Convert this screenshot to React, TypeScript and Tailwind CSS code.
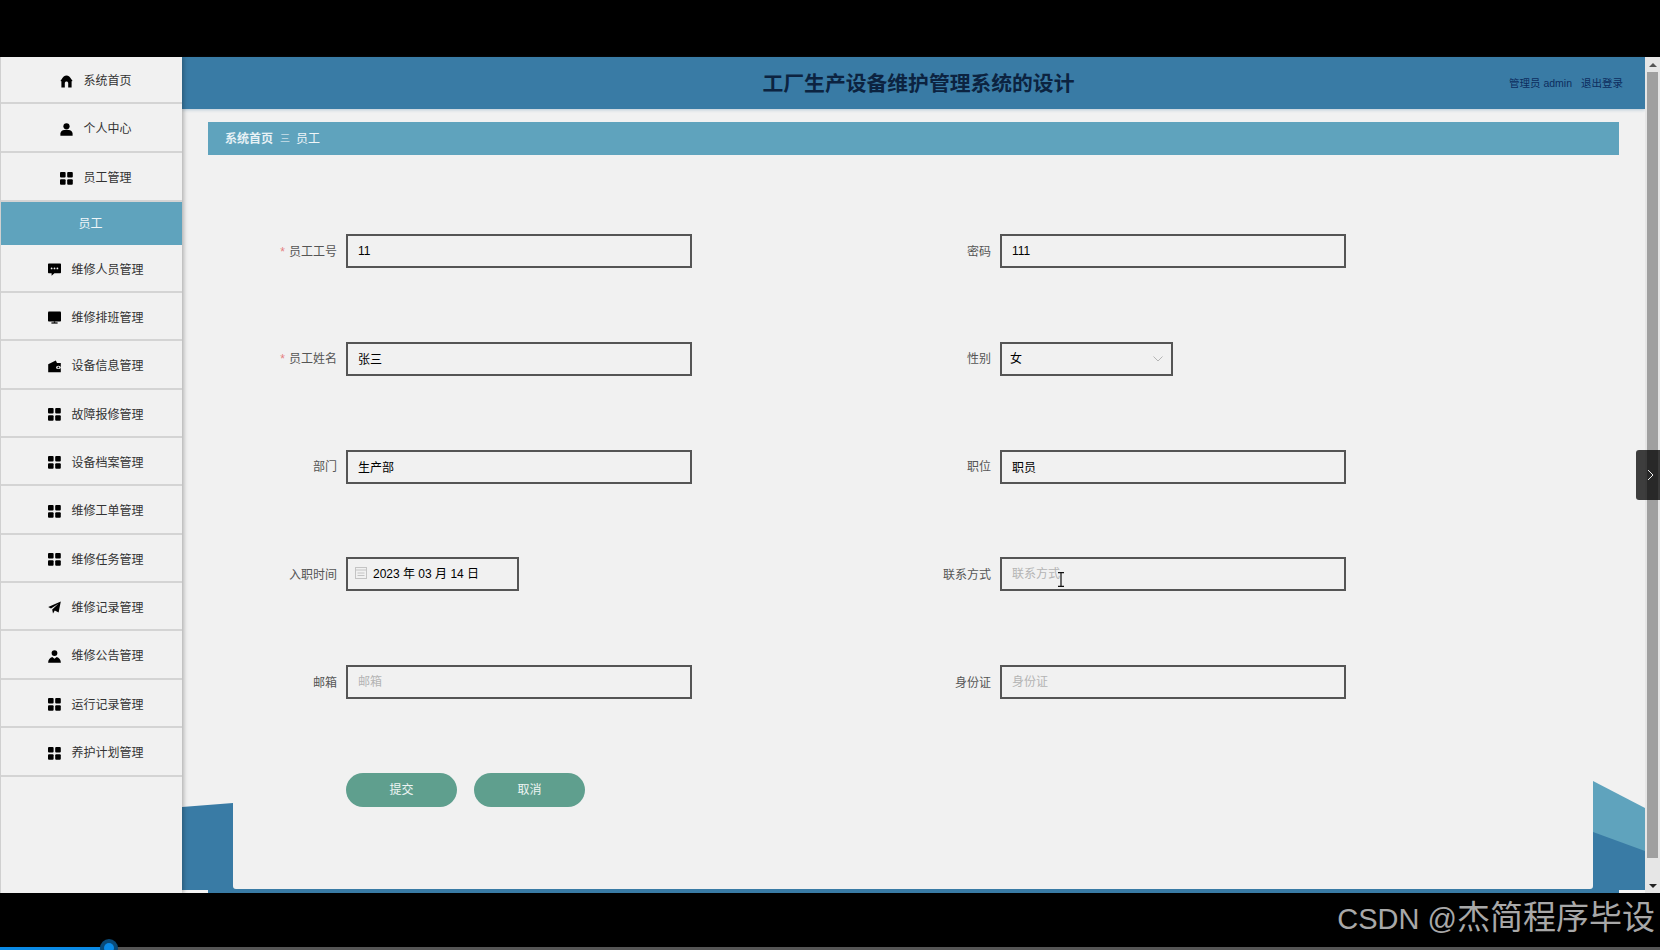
import React from "react";

const font = { fontFamily: '"Liberation Sans", "Noto Sans CJK SC", sans-serif' };

const Grid = () => (
  <svg viewBox="0 0 13 13" className="w-[13px] h-[13px]" fill="#000">
    <rect x="0" y="0" width="5.6" height="5.6" rx="1" />
    <rect x="7.2" y="0" width="5.6" height="5.6" rx="1" />
    <rect x="0" y="7.2" width="5.6" height="5.6" rx="1" />
    <rect x="7.2" y="7.2" width="5.6" height="5.6" rx="1" />
  </svg>
);
const Home = () => (
  <svg viewBox="0 0 13 13" className="w-[13px] h-[13px]" fill="#000">
    <path d="M6.5 .4 C8.5 .4 10.3 2 11.2 3.9 L12.6 5.9 L11.6 6.3 L11.6 12.6 L8.2 12.6 L8.2 8 C8.2 7 7.4 6.4 6.5 6.4 C5.6 6.4 4.8 7 4.8 8 L4.8 12.6 L1.4 12.6 L1.4 6.3 L.4 5.9 L1.8 3.9 C2.7 2 4.5 .4 6.5 .4 Z" />
  </svg>
);
const User = () => (
  <svg viewBox="0 0 13 13" className="w-[13px] h-[13px]" fill="#000">
    <circle cx="6.5" cy="3.3" r="3.1" />
    <path d="M.4 12.8 V10.6 C.4 8.6 2.4 7.3 4.2 7.1 H8.8 C10.6 7.3 12.6 8.6 12.6 10.6 V12.8 Z" />
  </svg>
);
const Chat = () => (
  <svg viewBox="0 0 13 13" className="w-[13px] h-[13px]" fill="#000">
    <path d="M1 .6 H12 C12.6 .6 13 1 13 1.6 V9.2 C13 9.8 12.6 10.2 12 10.2 H6.4 L3.6 12.8 V10.2 H1 C.4 10.2 0 9.8 0 9.2 V1.6 C0 1 .4 .6 1 .6 Z" />
    <circle cx="3.6" cy="5.4" r=".9" fill="#f1f1f1" />
    <circle cx="6.5" cy="5.4" r=".9" fill="#f1f1f1" />
    <circle cx="9.4" cy="5.4" r=".9" fill="#f1f1f1" />
  </svg>
);
const Monitor = () => (
  <svg viewBox="0 0 13 13" className="w-[13px] h-[13px]" fill="#000">
    <path d="M.8 .6 H12.2 C12.6 .6 13 1 13 1.4 V9.8 C13 10.2 12.6 10.6 12.2 10.6 H.8 C.4 10.6 0 10.2 0 9.8 V1.4 C0 1 .4 .6 .8 .6 Z" />
    <rect x="3.4" y="11.4" width="6.2" height="1.2" />
    <rect x="5.8" y="10.4" width="1.4" height="1.4" />
  </svg>
);
const Wallet = () => (
  <svg viewBox="0 0 13 13" className="w-[13px] h-[13px]" fill="#000">
    <path d="M.2 4.2 L7.8 .6 L9 3 H12.8 V12.2 H.2 Z" />
    <ellipse cx="10.4" cy="7.4" rx="2.4" ry="1.7" fill="#f1f1f1" />
    <circle cx="10.4" cy="7.4" r=".9" />
  </svg>
);
const Plane = () => (
  <svg viewBox="0 0 13 13" className="w-[13px] h-[13px]" fill="#000">
    <path d="M12.8 .6 L10.6 11.4 L6.8 9.4 L5 12.4 L4.2 8.4 L10.4 2.8 L3 7.4 L.2 6 Z" />
  </svg>
);
const Suit = () => (
  <svg viewBox="0 0 13 13" className="w-[13px] h-[13px]" fill="#000">
    <circle cx="6.5" cy="3.1" r="2.9" />
    <path d="M.1 12.8 C.3 9.6 1.8 7.5 4.3 7 L6.5 8.8 L8.7 7 C11.2 7.5 12.7 9.6 12.9 12.8 Z" />
  </svg>
);

const menu: { icon?: React.ReactNode; label: string; active?: boolean; h: string }[] = [
  { icon: <Home />, label: "系统首页", h: "h-[47px]" },
  { icon: <User />, label: "个人中心", h: "h-[49px]" },
  { icon: <Grid />, label: "员工管理", h: "h-[49px]" },
  { label: "员工", active: true, h: "h-[43px]" },
  { icon: <Chat />, label: "维修人员管理", h: "h-[48px]" },
  { icon: <Monitor />, label: "维修排班管理", h: "h-[48px]" },
  { icon: <Wallet />, label: "设备信息管理", h: "h-[49px]" },
  { icon: <Grid />, label: "故障报修管理", h: "h-[48px]" },
  { icon: <Grid />, label: "设备档案管理", h: "h-[48px]" },
  { icon: <Grid />, label: "维修工单管理", h: "h-[49px]" },
  { icon: <Grid />, label: "维修任务管理", h: "h-[48px]" },
  { icon: <Plane />, label: "维修记录管理", h: "h-[48px]" },
  { icon: <Suit />, label: "维修公告管理", h: "h-[49px]" },
  { icon: <Grid />, label: "运行记录管理", h: "h-[48px]" },
  { icon: <Grid />, label: "养护计划管理", h: "h-[49px]" },
];

const Label = ({ text, required }: { text: string; required?: boolean }) => (
  <label className="w-[129px] mr-[9px] pt-[1px] shrink-0 text-right text-[12px] text-[#555555]">
    {required && <span className="text-[#e57f7f] mr-[4px]">*</span>}
    {text}
  </label>
);

const inputCls =
  "w-[346px] h-[34px] border-2 border-[#555555] bg-transparent pl-[10px] pr-[9px] text-[12px] text-[#000000] placeholder:text-[#b4b4b4] outline-none";

const Field = ({ label, value, placeholder, required, children }: { label: string; value?: string; placeholder?: string; required?: boolean; children?: React.ReactNode }) => (
  <div className="flex items-center w-[654px]">
    <Label text={label} required={required} />
    {children ?? <input readOnly value={value} placeholder={placeholder} className={inputCls} style={font} />}
  </div>
);

export default function App() {
  return (
    <div className="w-[1660px] h-[950px] bg-black overflow-hidden flex flex-col" style={font}>
      <div className="h-[57px] shrink-0 bg-black" />
      <div className="h-[836px] shrink-0 flex">
        <aside className="w-[182px] shrink-0 bg-[#f1f1f1] border-l border-[#d0d0d0] shadow-[2px_0_4px_rgba(0,0,0,0.25)] z-10 flex flex-col">
          {menu.map((m) =>
            m.active ? (
              <div key={m.label} className={`${m.h} bg-[#5fa3bd] text-white/90 text-[12px] flex items-center justify-center pr-[2px]`}>
                {m.label}
              </div>
            ) : (
              <div key={m.label} className={`${m.h} shrink-0 border-b-2 border-[#d4d4d4] flex items-center justify-center pl-[9px] pt-[3px] gap-[10px] text-[12px] text-[#333333]`}>
                {m.icon}
                <span>{m.label}</span>
              </div>
            )
          )}
        </aside>

        <main className="relative w-[1463px] shrink-0 bg-[#f1f1f1] flex flex-col">
          <header className="h-[52px] shrink-0 bg-[#397ba5] grid grid-cols-[1fr_auto_1fr] items-center shadow-[0_1px_3px_rgba(60,120,160,0.3)]">
            <div />
            <h1 className="ml-[10px] pt-[2px] text-[20.8px] font-bold text-[#0c2340] whitespace-nowrap">工厂生产设备维护管理系统的设计</h1>
            <div className="justify-self-end pr-[22px] pt-[1px] text-[10.5px] text-[#0d2d5e] flex gap-[9px]">
              <span>管理员 admin</span>
              <span>退出登录</span>
            </div>
          </header>

          <nav className="mt-[13px] mx-[26px] h-[33px] shrink-0 bg-[#5fa3bd] flex items-center pl-[17px] text-[12px] text-white/90">
            <span className="font-bold text-white/85">系统首页</span>
            <span className="ml-[7px] mr-[6px] text-[10px] text-white/70">三</span>
            <span>员工</span>
          </nav>

          <form className="relative mt-[79px] ml-[26px] flex flex-col gap-[73.75px] z-10">
            <div className="flex">
              <Field label="员工工号" value="11" required />
              <Field label="密码" value="111" />
            </div>
            <div className="flex">
              <Field label="员工姓名" value="张三" required />
              <Field label="性别">
                <div className="w-[173px] h-[34px] border-2 border-[#555555] flex items-center justify-between pl-[8px] pr-[8px] text-[12px] text-[#000000]">
                  <span>女</span>
                  <svg viewBox="0 0 10 6" className="w-[10px] h-[6px]" fill="none" stroke="#b5b5b5" strokeWidth="1">
                    <path d="M.5 .5 L5 5 L9.5 .5" />
                  </svg>
                </div>
              </Field>
            </div>
            <div className="flex">
              <Field label="部门" value="生产部" />
              <Field label="职位" value="职员" />
            </div>
            <div className="flex">
              <Field label="入职时间">
                <div className="w-[173px] h-[34px] border-2 border-[#555555] flex items-center pl-[7px] text-[12px] text-[#000000]">
                  <svg viewBox="0 0 12 12" className="w-[12px] h-[12px] mr-[6px] -mt-[3px]" fill="none" stroke="#c4c4c4" strokeWidth="1">
                    <rect x=".5" y=".5" width="11" height="11" />
                    <path d="M.5 3 H11.5 M2.5 6 H9.5 M2.5 8.5 H9.5" />
                  </svg>
                  <span>2023 年 03 月 14 日</span>
                </div>
              </Field>
              <Field label="联系方式" placeholder="联系方式">
                <div className="relative">
                  <input readOnly placeholder="联系方式" className={inputCls} style={font} />
                  <svg viewBox="0 0 8 15" className="absolute left-[57px] top-[15px] w-[8px] h-[15px]" fill="none" stroke="#111111" strokeWidth="1.2">
                    <path d="M1 .6 H7 M4 .6 V14.4 M1 14.4 H7" />
                  </svg>
                </div>
              </Field>
            </div>
            <div className="flex">
              <Field label="邮箱" placeholder="邮箱" />
              <Field label="身份证" placeholder="身份证" />
            </div>
          </form>

          <div className="relative z-10 mt-[74px] ml-[164px] flex gap-[17px]">
            <button className="w-[111px] h-[34px] rounded-full bg-[#5f9f8e] text-white/90 text-[12px]">提交</button>
            <button className="w-[111px] h-[34px] rounded-full bg-[#5f9f8e] text-white/90 text-[12px]">取消</button>
          </div>

          <svg viewBox="0 0 51 90" className="absolute left-0 bottom-0 w-[51px] h-[90px]">
            <path d="M0 4 L51 0 V90 H0 Z" fill="#397ba5" />
          </svg>
          <svg viewBox="0 0 3 3" className="absolute left-[51px] bottom-[4px] w-[3px] h-[3px]">
            <path d="M0 0 Q0 3 3 3 H0 Z" fill="#397ba5" />
          </svg>
          <svg viewBox="0 0 3 3" className="absolute right-[52px] bottom-[4px] w-[3px] h-[3px]">
            <path d="M3 0 Q3 3 0 3 H3 Z" fill="#397ba5" />
          </svg>
          <div className="absolute left-[26px] right-[26px] bottom-0 h-[4px] bg-[#397ba5]" />
          <div className="absolute left-0 w-[26px] bottom-0 h-[3px] bg-[#f4f4f4]" />
          <svg viewBox="0 0 52 112" className="absolute right-0 bottom-0 w-[52px] h-[112px]">
            <path d="M0 0 L52 27 V112 H0 Z" fill="#5fa3bd" />
            <path d="M0 51 L52 70 V112 H0 Z" fill="#397ba5" />
            <rect x="26" y="109" width="26" height="3" fill="#f4f4f4" />
          </svg>
        </main>

        <div className="relative flex-1 bg-[#e6e6e6] flex flex-col items-center">
          <div className="h-[15px] shrink-0 flex items-center justify-center">
            <svg viewBox="0 0 8 4" className="w-[8px] h-[4px]" fill="#555555">
              <path d="M4 0 L8 4 H0 Z" />
            </svg>
          </div>
          <div className="w-[11px] h-[786px] shrink-0 bg-[#a0a0a0]" />
          <div className="flex-1 flex items-end justify-center pb-[5px]">
            <svg viewBox="0 0 8 4" className="w-[8px] h-[4px]" fill="#222222">
              <path d="M4 4 L8 0 H0 Z" />
            </svg>
          </div>
          <div className="absolute right-0 top-[393px] w-[24px] h-[50px] rounded-l-[3px] bg-black/75 flex items-center justify-end pr-[6px] z-20">
            <svg viewBox="0 0 7 12" className="w-[7px] h-[12px]" fill="none" stroke="#eeeeee" strokeWidth="1">
              <path d="M1 1 L6 6 L1 11" />
            </svg>
          </div>
        </div>
      </div>

      <div className="relative flex-1 bg-black overflow-hidden">
        <div className="absolute right-[5px] top-[5px] text-[#a8a8a8] whitespace-nowrap leading-[40px]">
          <span className="text-[29px]">CSDN @</span>
          <span className="text-[33px]">杰简程序毕设</span>
        </div>
        <div className="absolute left-0 right-0 bottom-0 h-[3px] bg-[#555555]">
          <div className="h-full w-[108px] bg-[#0a8ae6]" />
        </div>
        <div className="absolute left-[100px] top-[46px] w-[18px] h-[18px] rounded-full bg-[#0a4a78] flex items-center justify-center">
          <div className="w-[10px] h-[10px] rounded-full bg-[#0a8ae6]" />
        </div>
      </div>
    </div>
  );
}
